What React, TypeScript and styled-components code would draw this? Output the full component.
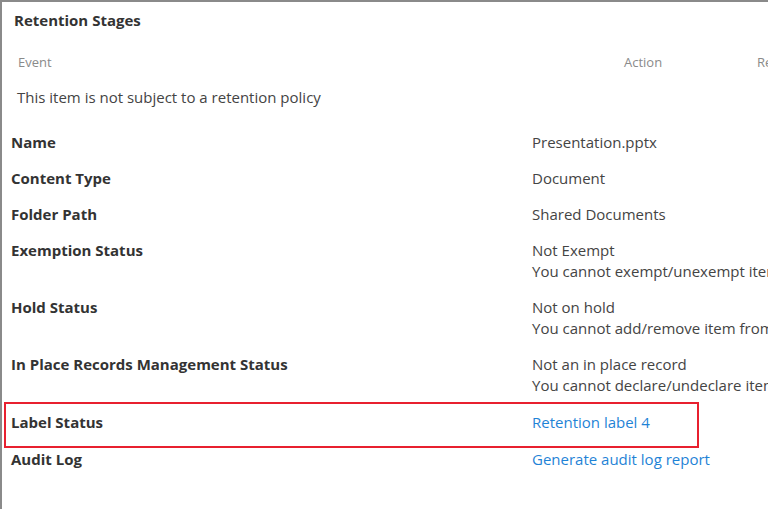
import React from 'react'
import styled, { createGlobalStyle } from 'styled-components'

const GlobalStyle = createGlobalStyle`
  html, body {
    margin: 0;
    padding: 0;
    width: 768px;
    height: 509px;
    overflow: hidden;
    background: #ffffff;
  }

  body {
    font-family: 'Segoe UI', 'Open Sans', 'Noto Sans', sans-serif;
    color: #444444;
  }
`

const Panel = styled.div`
  box-sizing: border-box;
  width: 980px;
  height: 509px;

  border-top: 2px solid #8a8a8a;
  border-left: 2px solid #8a8a8a;
  background: #ffffff;
`

const SectionTitle = styled.div`
  padding: 8px 0 0 12px;
  height: 30px;

  font-size: 15px;
  font-weight: 700;
  line-height: 20px;
  color: #333333;
`

const StageHeader = styled.div`
  display: grid;
  grid-template-columns: 606px 133px auto;
  padding: 12px 0 0 16px;

  font-size: 13px;
  line-height: 20px;
  color: #8a8a8a;
`

const EmptyNote = styled.div`
  padding: 15px 0 0 15px;
  height: 22px;

  font-size: 15px;
  line-height: 20px;
  color: #444444;
`

const Details = styled.div`
  display: flex;
  flex-direction: column;
  padding-top: 16px;
`

const Row = styled.div<{ $highlight?: boolean }>`
  position: relative;
  display: grid;
  grid-template-columns: 521px auto;
  padding: 7px 0 8px 9px;

  font-size: 15px;
  line-height: 21px;

  ${p =>
    p.$highlight &&
    `
    margin-top: 1px;
    margin-bottom: 1px;

    &::after {
      content: '';
      position: absolute;
      left: 2px;
      top: -3px;
      width: 695px;
      height: 46px;
      box-sizing: border-box;
      border: 2px solid #e8202f;
      pointer-events: none;
    }
  `}
`

const Label = styled.div`
  font-weight: 700;
  color: #333333;
  white-space: nowrap;
`

const Value = styled.div`
  display: flex;
  flex-direction: column;
  color: #444444;
  white-space: nowrap;
`

const Link = styled.a`
  color: #1f83d6;
  text-decoration: none;
  cursor: pointer;
`

interface Detail {
  label: string
  lines: string[]
  link?: boolean
  highlight?: boolean
}

const details: Detail[] = [
  { label: 'Name', lines: ['Presentation.pptx'] },
  { label: 'Content Type', lines: ['Document'] },
  { label: 'Folder Path', lines: ['Shared Documents'] },
  {
    label: 'Exemption Status',
    lines: ['Not Exempt', 'You cannot exempt/unexempt items from this policy'],
  },
  {
    label: 'Hold Status',
    lines: ['Not on hold', 'You cannot add/remove item from hold'],
  },
  {
    label: 'In Place Records Management Status',
    lines: ['Not an in place record', 'You cannot declare/undeclare items as records'],
  },
  { label: 'Label Status', lines: ['Retention label 4'], link: true, highlight: true },
  { label: 'Audit Log', lines: ['Generate audit log report'], link: true },
]

export default function App() {
  return (
    <>
      <GlobalStyle />
      <Panel>
        <SectionTitle>Retention Stages</SectionTitle>
        <StageHeader>
          <span>Event</span>
          <span>Action</span>
          <span>Retention</span>
        </StageHeader>
        <EmptyNote>This item is not subject to a retention policy</EmptyNote>
        <Details>
          {details.map(d => (
            <Row key={d.label} $highlight={d.highlight}>
              <Label>{d.label}</Label>
              <Value>
                {d.lines.map(line =>
                  d.link ? <Link key={line}>{line}</Link> : <span key={line}>{line}</span>
                )}
              </Value>
            </Row>
          ))}
        </Details>
      </Panel>
    </>
  )
}
